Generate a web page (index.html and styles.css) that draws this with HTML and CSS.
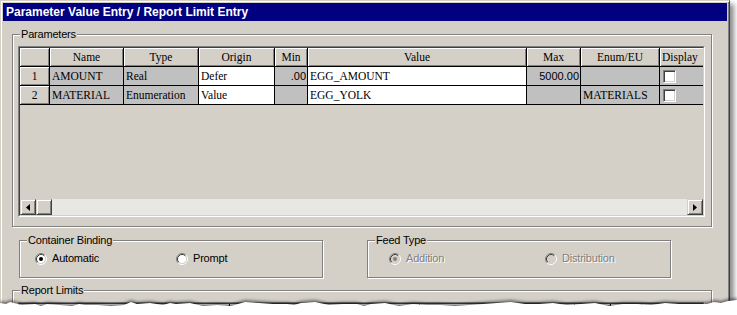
FILE: index.html
```html
<!DOCTYPE html>
<html lang="en">
<head>
  <meta charset="UTF-8">
  <meta name="viewport" content="width=device-width, initial-scale=1.0">
  <title>Parameter Value Entry / Report Limit Entry</title>
  <link rel="stylesheet" href="styles.css">
</head>
<body>
  <div class="shot">
    <div class="window">
      <div class="titlebar">Parameter Value Entry / Report Limit Entry</div>

      <div class="group params">
        <span class="legend">Parameters</span>
        <div class="grid">
          <div class="grid-in">
            <div class="rows">
              <div class="row">
                <div class="cell hd"></div>
                <div class="cell hd">Name</div>
                <div class="cell hd">Type</div>
                <div class="cell hd">Origin</div>
                <div class="cell hd">Min</div>
                <div class="cell hd">Value</div>
                <div class="cell hd">Max</div>
                <div class="cell hd">Enum/EU</div>
                <div class="cell hd left">Display</div>
              </div>
              <div class="row">
                <div class="cell hd">1</div>
                <div class="cell">AMOUNT</div>
                <div class="cell">Real</div>
                <div class="cell w">Defer</div>
                <div class="cell num">.00</div>
                <div class="cell w">EGG_AMOUNT</div>
                <div class="cell num">5000.00</div>
                <div class="cell"></div>
                <div class="cell"><span class="check"></span></div>
              </div>
              <div class="row">
                <div class="cell hd">2</div>
                <div class="cell">MATERIAL</div>
                <div class="cell">Enumeration</div>
                <div class="cell w">Value</div>
                <div class="cell"></div>
                <div class="cell w">EGG_YOLK</div>
                <div class="cell"></div>
                <div class="cell">MATERIALS</div>
                <div class="cell"><span class="check"></span></div>
              </div>
            </div>
            <div class="hscroll">
              <span class="sbtn">
                <svg width="4" height="7" viewBox="0 0 4 7"><path d="M4 0 L0 3.5 L4 7 Z" fill="#000"/></svg>
              </span>
              <span class="sbtn"></span>
              <span class="track"></span>
              <span class="sbtn">
                <svg width="4" height="7" viewBox="0 0 4 7"><path d="M0 0 L4 3.5 L0 7 Z" fill="#000"/></svg>
              </span>
            </div>
          </div>
        </div>
      </div>

      <div class="options">
        <div class="group small binding">
          <span class="legend">Container Binding</span>
          <label class="radio first">
            <svg class="dot" width="12" height="12" viewBox="0 0 12 12">
              <circle class="face" cx="6" cy="6" r="4.5"/>
              <path d="M2.11 9.89 A5.5 5.5 0 0 1 9.89 2.11" stroke="#808080" fill="none"/>
              <path d="M9.89 2.11 A5.5 5.5 0 0 1 2.11 9.89" stroke="#fff" fill="none"/>
              <path d="M2.82 9.18 A4.5 4.5 0 0 1 9.18 2.82" stroke="#404040" fill="none"/>
              <path d="M9.18 2.82 A4.5 4.5 0 0 1 2.82 9.18" stroke="#d4d0c8" fill="none"/>
              <circle class="pip" cx="6" cy="6" r="2"/>
            </svg>
            Automatic
          </label>
          <label class="radio">
            <svg class="dot" width="12" height="12" viewBox="0 0 12 12">
              <circle class="face" cx="6" cy="6" r="4.5"/>
              <path d="M2.11 9.89 A5.5 5.5 0 0 1 9.89 2.11" stroke="#808080" fill="none"/>
              <path d="M9.89 2.11 A5.5 5.5 0 0 1 2.11 9.89" stroke="#fff" fill="none"/>
              <path d="M2.82 9.18 A4.5 4.5 0 0 1 9.18 2.82" stroke="#404040" fill="none"/>
              <path d="M9.18 2.82 A4.5 4.5 0 0 1 2.82 9.18" stroke="#d4d0c8" fill="none"/>
            </svg>
            Prompt
          </label>
        </div>

        <div class="group small feed disabled">
          <span class="legend">Feed Type</span>
          <label class="radio first">
            <svg class="dot" width="12" height="12" viewBox="0 0 12 12">
              <circle class="face" cx="6" cy="6" r="4.5"/>
              <path d="M2.11 9.89 A5.5 5.5 0 0 1 9.89 2.11" stroke="#808080" fill="none"/>
              <path d="M9.89 2.11 A5.5 5.5 0 0 1 2.11 9.89" stroke="#fff" fill="none"/>
              <path d="M2.82 9.18 A4.5 4.5 0 0 1 9.18 2.82" stroke="#404040" fill="none"/>
              <path d="M9.18 2.82 A4.5 4.5 0 0 1 2.82 9.18" stroke="#d4d0c8" fill="none"/>
              <circle class="pip" cx="6" cy="6" r="2"/>
            </svg>
            Addition
          </label>
          <label class="radio">
            <svg class="dot" width="12" height="12" viewBox="0 0 12 12">
              <circle class="face" cx="6" cy="6" r="4.5"/>
              <path d="M2.11 9.89 A5.5 5.5 0 0 1 9.89 2.11" stroke="#808080" fill="none"/>
              <path d="M9.89 2.11 A5.5 5.5 0 0 1 2.11 9.89" stroke="#fff" fill="none"/>
              <path d="M2.82 9.18 A4.5 4.5 0 0 1 9.18 2.82" stroke="#404040" fill="none"/>
              <path d="M9.18 2.82 A4.5 4.5 0 0 1 2.82 9.18" stroke="#d4d0c8" fill="none"/>
            </svg>
            Distribution
          </label>
        </div>
      </div>

      <div class="group limits">
        <span class="legend">Report Limits</span>
        <div class="grid">
          <div class="grid-in">
            <div class="row limit-row">
              <div class="cell hd"></div>
              <div class="cell hd"></div>
              <div class="cell hd"></div>
              <div class="cell hd"></div>
              <div class="cell hd"></div>
              <div class="cell hd"></div>
              <div class="cell hd"></div>
              <div class="cell hd"></div>
              <div class="cell hd"></div>
              <div class="cell hd"></div>
              <div class="cell hd"></div>
              <div class="cell hd"></div>
            </div>
          </div>
        </div>
      </div>
    </div>

    <!-- torn paper edge over the bottom of the capture -->
    <svg class="tear" width="737" height="22" viewBox="0 0 737 22">
      <defs>
        <filter id="soft" x="-5%" y="-100%" width="110%" height="300%">
          <feGaussianBlur stdDeviation="1.6"/>
        </filter>
        <path id="edge" d="M0 10 L6 11 L10 9 L22 12 L35 11 L41 13 L47 11 L60 12 L72 13 L79 11 L85 12 L98 12 L111 13 L124 12 L131 9 L137 11 L150 10 L163 12 L170 10 L176 11 L190 10 L203 13 L217 12 L231 13 L238 11 L245 9 L259 10 L273 11 L287 11 L294 12 L301 10 L315 9 L329 12 L343 11 L357 11 L364 13 L371 11 L385 10 L399 13 L413 11 L427 12 L441 12 L455 13 L469 12 L483 11 L497 10 L511 9 L525 11 L539 11 L553 10 L567 12 L581 11 L595 10 L609 13 L623 11 L637 11 L651 12 L665 10 L679 11 L693 11 L707 11 L714 9 L721 10 L728 8 L737 7 L737 22 L0 22 Z"/>
      </defs>
      <use href="#edge" fill="#000" opacity="0.5" transform="translate(0 -2)" filter="url(#soft)"/>
      <use href="#edge" fill="#fff"/>
    </svg>
  </div>
</body>
</html>
```

FILE: styles.css
```css
body {
  margin: 0;
  background: #ffffff;
  font-family: "Liberation Sans", Arial, sans-serif;
  font-size: 11px;
  color: #000;
}
.shot {
  position: relative;
  width: 737px;
  height: 315px;
  overflow: hidden;
}
.window {
  box-sizing: border-box;
  width: 730px;
  height: 340px;
  padding: 2px;
  background: #d4d0c8;
  border: 1px solid;
  border-color: #d4d0c8 #404040 #404040 #d4d0c8;
  box-shadow: inset 1px 1px #fff, inset -1px -1px #808080, 4px 4px 5px rgba(0, 0, 0, 0.45);
}
.titlebar {
  height: 18px;
  line-height: 18px;
  padding-left: 3px;
  background: #000080;
  color: #fff;
  font-weight: bold;
  font-size: 12px;
  white-space: nowrap;
}

/* etched group boxes */
.group {
  position: relative;
  box-sizing: border-box;
  border: 1px solid #808080;
  box-shadow: inset 1px 1px #fff, 1px 1px #fff;
}
.legend {
  position: absolute;
  top: -7px;
  left: 7px;
  padding: 0 1px;
  line-height: 13px;
  background: #d4d0c8;
  letter-spacing: -0.2px;
  white-space: nowrap;
}
.params {
  width: 700px;
  height: 193px;
  margin: 13px 0 0 9px;
}

/* grid */
.grid {
  box-sizing: border-box;
  width: 687px;
  height: 171px;
  margin: 11px 0 0 5px;
  border: 1px solid;
  border-color: #808080 #fff #fff #808080;
}
.grid-in {
  box-sizing: border-box;
  height: 100%;
  display: flex;
  flex-direction: column;
  overflow: hidden;
  border: 1px solid;
  border-color: #404040 #d4d0c8 #d4d0c8 #404040;
}
.rows {
  flex: 1;
  overflow: hidden;
}
.row {
  display: grid;
  grid-template-columns: 30px 74px 75px 76px 33px 219px 54px 79px 60px;
  height: 19px;
}
.cell {
  box-sizing: border-box;
  padding: 0 2px;
  border-right: 1px solid #000;
  border-bottom: 1px solid #000;
  background: #c0c0c0;
  font-family: "Liberation Serif", "Times New Roman", serif;
  font-size: 11.5px;
  line-height: 18px;
  white-space: nowrap;
  overflow: hidden;
}
.cell.hd {
  background: #d4d0c8;
  text-align: center;
  box-shadow: inset 1px 1px #fff, inset -1px -1px #808080;
}
.cell.hd.left {
  text-align: left;
}
.cell.w {
  background: #fff;
}
.cell.num {
  text-align: right;
  padding-right: 1px;
  font-family: "Liberation Sans", Arial, sans-serif;
  font-size: 11px;
}
.check {
  display: block;
  box-sizing: border-box;
  width: 13px;
  height: 13px;
  margin: 3px 0 0 1px;
  background: #fff;
  border: 1px solid;
  border-color: #808080 #fff #fff #808080;
  box-shadow: inset 1px 1px #404040, inset -1px -1px #d4d0c8;
}

/* horizontal scrollbar */
.hscroll {
  display: flex;
  height: 16px;
}
.sbtn {
  box-sizing: border-box;
  width: 16px;
  height: 16px;
  display: flex;
  align-items: center;
  justify-content: center;
  background: #d4d0c8;
  border: 1px solid;
  border-color: #d4d0c8 #404040 #404040 #d4d0c8;
  box-shadow: inset 1px 1px #fff, inset -1px -1px #808080;
}
.track {
  flex: 1;
  background: #e9e7e3;
}

/* radio groups */
.options {
  display: flex;
  gap: 44px;
  margin: 13px 0 0 16px;
}
.small {
  width: 304px;
  height: 38px;
  display: flex;
  align-items: center;
  padding-bottom: 1px;
}
.binding {
  padding-left: 15px;
}
.binding .first {
  width: 141px;
}
.feed {
  padding-left: 21px;
}
.feed .first {
  width: 156px;
}
.radio {
  display: inline-flex;
  align-items: center;
  gap: 5px;
  line-height: 13px;
  letter-spacing: -0.2px;
}
.dot {
  flex: none;
}
.face {
  fill: #fff;
}
.pip {
  fill: #000;
}
.disabled .radio {
  color: #808080;
  text-shadow: 1px 1px #fff;
}
.disabled .face {
  fill: #d4d0c8;
}
.disabled .pip {
  fill: #808080;
}

.limits {
  width: 700px;
  height: 60px;
  margin: 12px 0 0 9px;
}
.limits .grid {
  height: 40px;
}
.limit-row {
  grid-template-columns: 30px 100px 80px 42px 73px 75px 80px 75px 36px 31px 31px 30px;
}

.tear {
  position: absolute;
  left: 0;
  bottom: 0;
}
```
